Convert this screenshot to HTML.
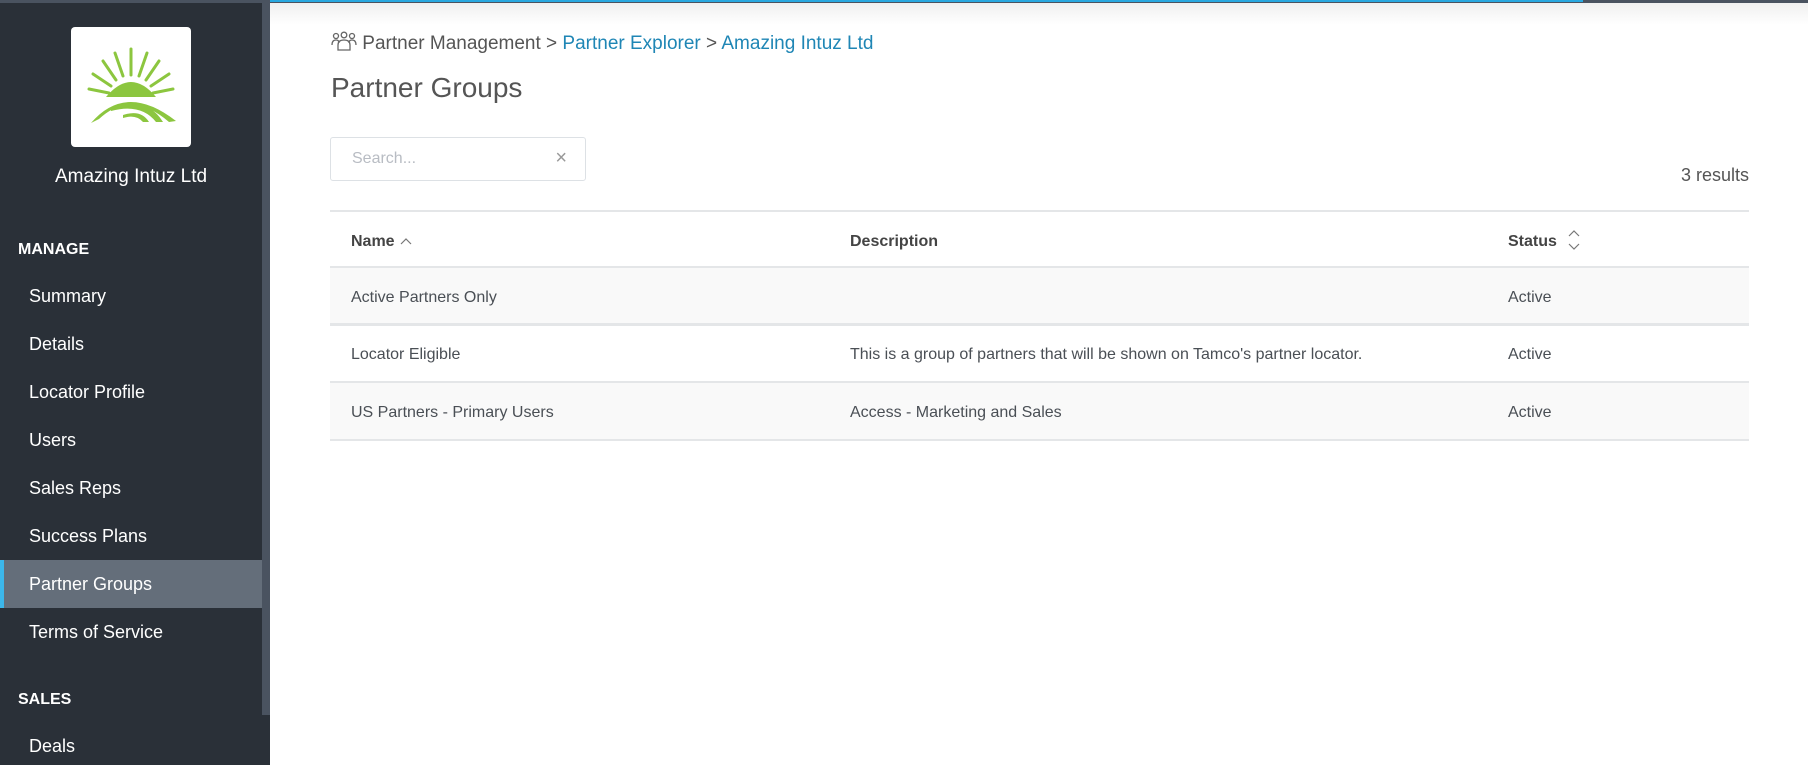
<!DOCTYPE html>
<html><head><meta charset="utf-8"><style>
*{box-sizing:border-box;margin:0;padding:0}
body{width:1808px;height:765px;overflow:hidden;background:#fff;font-family:"Liberation Sans",sans-serif;position:relative;color:#4a4f55}
.top{position:absolute;left:0;top:0;width:1808px;height:3px;background:#4a5360}
.topb{position:absolute;left:270px;top:0;width:1313px;height:2px;background:#29a8e0}
.shadow{position:absolute;left:270px;top:3px;width:1538px;height:22px;background:linear-gradient(#f0f0f0,#fff)}
.side{position:absolute;left:0;top:3px;width:270px;height:762px;background:#2a3038}
.scroll{position:absolute;left:262px;top:3px;width:8px;height:712px;background:#4a5360}
.logo{position:absolute;left:71px;top:27px;width:120px;height:120px;background:#fff;border-radius:4px}
.cname{position:absolute;left:0;width:262px;top:166px;text-align:center;color:#fff;font-size:19px}
.sec{position:absolute;left:18px;color:#fff;font-weight:bold;font-size:16px}
.it{position:absolute;left:0;width:262px;height:48px;line-height:48px;padding-left:29px;color:#fff;font-size:18px}
.act{background:#646e7a;border-left:4px solid #3cb7ea;padding-left:25px}
.bc{position:absolute;left:331px;top:31px;font-size:19px;color:#555}
.bc a{color:#1f86b5;text-decoration:none}
h1{position:absolute;left:331px;top:72px;font-size:28px;font-weight:300;color:#555}
.search{position:absolute;left:330px;top:137px;width:256px;height:44px;border:1px solid #dde1e5;border-radius:3px}
.search span{position:absolute;left:21px;top:12px;color:#b8bcc3;font-size:16px}
.search i{position:absolute;right:18px;top:9px;font-style:normal;color:#999;font-size:20px}
.res{position:absolute;right:59px;top:165px;font-size:18px;color:#555}
.row{position:absolute;left:330px;width:1419px;border-top:2px solid #e4e6e8;font-size:16px;color:#4a4f55}
.row div{position:absolute;top:0}
.c1{left:21px}.c2{left:520px}.c3{left:1178px}
</style></head><body>
<div class="top"></div><div class="topb"></div><div class="shadow"></div>
<div class="side"></div><div class="scroll"></div>
<div class="logo"><svg width="120" height="120" viewBox="0 0 120 120">
<g stroke="#8cc63f" stroke-width="3" stroke-linecap="round">
<line x1="60" y1="48" x2="60" y2="22"/><line x1="52" y1="49" x2="44" y2="26"/><line x1="68" y1="49" x2="76" y2="26"/>
<line x1="45" y1="53" x2="32" y2="34"/><line x1="75" y1="53" x2="88" y2="34"/><line x1="40" y1="59" x2="22" y2="47"/>
<line x1="80" y1="59" x2="98" y2="47"/><line x1="38" y1="66" x2="18" y2="62"/><line x1="82" y1="66" x2="102" y2="62"/>
</g>
<path d="M35 70 Q60 40 85 70 Z" fill="#8cc63f"/>
<path d="M20 96 Q55 55 105 94 L98 95 Q60 62 28 92 Z" fill="#8cc63f"/>
<path d="M40 80 Q75 68 92 95 L85 95 Q70 76 40 84 Z" fill="#8cc63f"/>
<path d="M52 88 Q70 82 78 95 L72 95 Q65 87 52 91 Z" fill="#8cc63f"/>
</svg></div>
<div class="cname">Amazing Intuz Ltd</div>
<div class="sec" style="top:241px">MANAGE</div>
<div class="it" style="top:272px">Summary</div>
<div class="it" style="top:320px">Details</div>
<div class="it" style="top:368px">Locator Profile</div>
<div class="it" style="top:416px">Users</div>
<div class="it" style="top:464px">Sales Reps</div>
<div class="it" style="top:512px">Success Plans</div>
<div class="it act" style="top:560px">Partner Groups</div>
<div class="it" style="top:608px">Terms of Service</div>
<div class="sec" style="top:691px">SALES</div>
<div class="it" style="top:722px">Deals</div>

<div class="bc"><svg width="26" height="20" viewBox="0 0 26 20" style="vertical-align:-2px" fill="none" stroke="#666" stroke-width="1.3"><circle cx="5" cy="5" r="2.5"/><circle cx="13" cy="4" r="2.8"/><circle cx="21" cy="5" r="2.5"/><path d="M1 14 Q1 9 5 9 Q8 9 8 12"/><path d="M25 14 Q25 9 21 9 Q18 9 18 12"/><path d="M7 19 V14 Q7 9 13 9 Q19 9 19 14 V19 Z"/></svg> Partner Management &gt; <a>Partner Explorer</a> &gt; <a>Amazing Intuz Ltd</a></div>
<h1>Partner Groups</h1>
<div class="search"><span>Search...</span><i>×</i></div>
<div class="res">3 results</div>

<div class="row" style="top:210px;height:58px;font-weight:bold;color:#444">
<div class="c1" style="top:21px">Name <svg width="14" height="10" viewBox="0 0 14 10" fill="none" stroke="#777" stroke-width="1.2"><path d="M2 8 L7 3 L12 8"/></svg></div>
<div class="c2" style="top:21px">Description</div>
<div class="c3" style="top:21px">Status</div>
<svg style="position:absolute;left:1237px;top:15px" width="14" height="26" viewBox="0 0 14 26" fill="none" stroke="#777" stroke-width="1.2"><path d="M2 9 L7 4 L12 9"/><path d="M2 17 L7 22 L12 17"/></svg>
</div>
<div class="row" style="top:266px;height:59px;background:#f9f9f9"><div class="c1" style="top:21px">Active Partners Only</div><div class="c3" style="top:21px">Active</div></div>
<div class="row" style="top:323px;height:60px;border-top-width:3px"><div class="c1" style="top:20px">Locator Eligible</div><div class="c2" style="top:20px">This is a group of partners that will be shown on Tamco's partner locator.</div><div class="c3" style="top:20px">Active</div></div>
<div class="row" style="top:381px;height:60px;background:#f9f9f9;border-bottom:2px solid #e4e6e8"><div class="c1" style="top:21px">US Partners - Primary Users</div><div class="c2" style="top:21px">Access - Marketing and Sales</div><div class="c3" style="top:21px">Active</div></div>
</body></html>
